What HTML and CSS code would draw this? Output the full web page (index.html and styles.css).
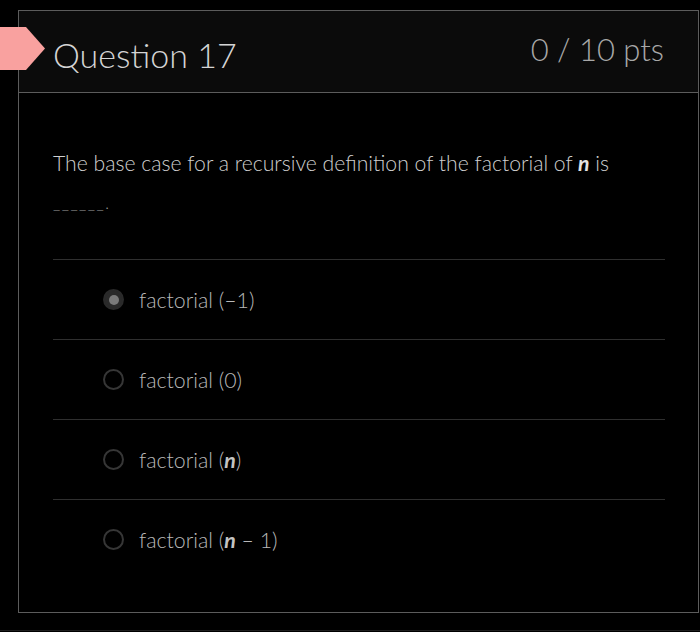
FILE: index.html
```html
<!DOCTYPE html>
<html>
<head>
<meta charset="utf-8">
<link rel="stylesheet" href="styles.css">
</head>
<body>
<div class="card">
  <div class="flag"></div>
  <div class="header">
    <h2 class="title">Question 17</h2>
    <div class="pts">0 / 10 pts</div>
  </div>
  <div class="body">
    <p class="question">The base case for a recursive definition of the factorial of <b><i>n</i></b> is</p>
    <p class="blank">______.</p>
    <div class="answers">
      <div class="answer"><span class="radio selected"></span><span class="label">factorial (–1)</span></div>
      <div class="answer"><span class="radio"></span><span class="label">factorial (0)</span></div>
      <div class="answer"><span class="radio"></span><span class="label">factorial (<b><i>n</i></b>)</span></div>
      <div class="answer"><span class="radio"></span><span class="label">factorial (<b><i>n</i></b> – 1)</span></div>
    </div>
  </div>
</div>
<div class="next"></div>
</body>
</html>
```
FILE: styles.css
```css
html, body {
  margin: 0;
  padding: 0;
  background: #000;
}
body {
  font-family: "Lato Light", Lato, "Open Sans", sans-serif;
  color: #c8c8c8;
  height: 632px;
  overflow: hidden;
}
.card {
  position: relative;
  margin: 10px 1px 0 18px;
  border: 1px solid #5c5c5c;
  height: 603px;
  box-sizing: border-box;
}
.next {
  margin-top: 17px;
  border-top: 1px solid #1e1e1e;
}
.flag {
  position: absolute;
  left: -19px;
  top: 16px;
  width: 45px;
  height: 43px;
  background: #f9a19f;
  clip-path: polygon(0 0, 26px 0, 45px 50%, 26px 100%, 0 100%);
}
.header {
  height: 82px;
  box-sizing: border-box;
  background: #0b0b0b;
  border-bottom: 1px solid #5c5c5c;
  display: flex;
  justify-content: space-between;
  align-items: flex-start;
  padding: 0 34px;
}
.title {
  margin: 24px 0 0;
  font-weight: 300;
  font-size: 34px;
  line-height: 40px;
  color: #d4d4d4;
}
.pts {
  margin-top: 20px;
  font-size: 31px;
  font-weight: 300;
  line-height: 36px;
  color: #a8a8a8;
}
.body {
  padding: 0 33px 0 34px;
}
.question {
  margin: 56px 0 0;
  font-size: 21.2px;
  font-weight: 300;
  line-height: 28px;
  color: #cfcfcf;
}
.question b, .label b {
  font-family: Lato, sans-serif;
  font-weight: 700;
  color: #e2e2e2;
}
.label b {
  color: #c4c4c4;
}
.blank {
  margin: 17px 0 0;
  font-size: 16px;
  line-height: 18px;
  letter-spacing: 1.5px;
  color: #9a9a9a;
}
.answers {
  margin-top: 47px;
}
.answer {
  border-top: 1px solid #2f2f2f;
  height: 80px;
  box-sizing: border-box;
  display: flex;
  align-items: center;
  padding-left: 50px;
  gap: 15px;
}
.radio {
  width: 21px;
  height: 21px;
  box-sizing: border-box;
  border-radius: 50%;
  border: 2px solid #363636;
  display: flex;
  align-items: center;
  justify-content: center;
}
.radio.selected {
  background: #2a2a2a;
  border-color: #2a2a2a;
}
.radio.selected::after {
  content: "";
  width: 10px;
  height: 10px;
  border-radius: 50%;
  background: #7a7a7a;
}
.label {
  font-size: 21.3px;
  font-weight: 300;
  color: #b8b8b8;
  line-height: 24px;
}
```
